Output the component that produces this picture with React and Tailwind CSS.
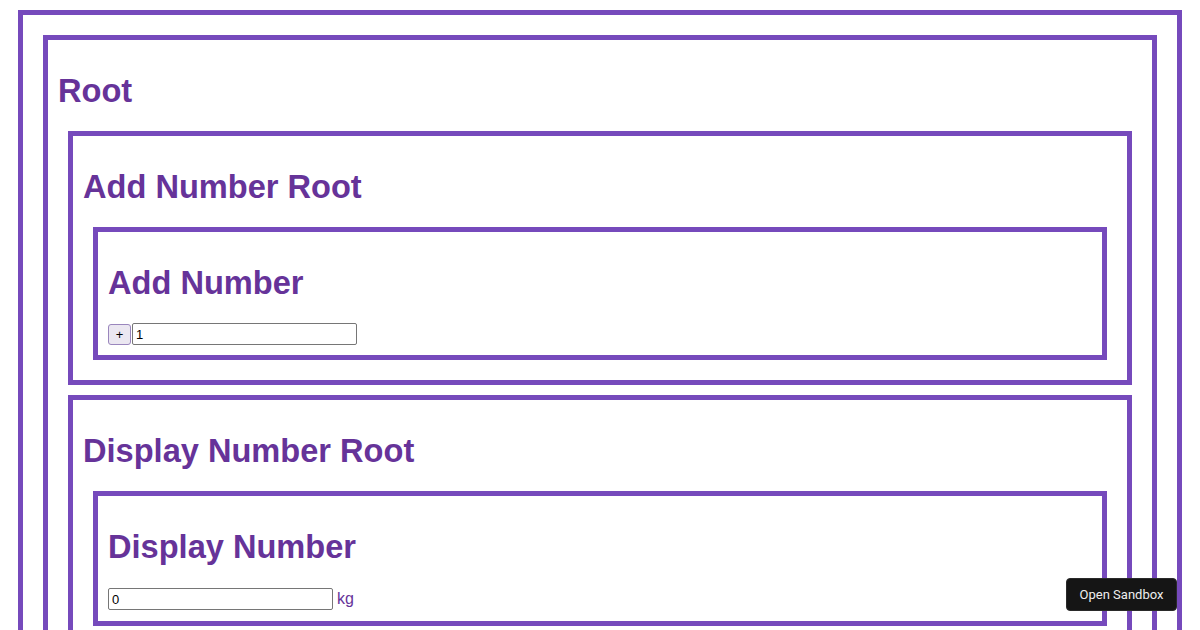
import React, { useState } from 'react';

const font = { fontFamily: '"Liberation Sans", Arial, sans-serif' };

function Box({ children, outer }) {
  return (
    <div
      className={`${outer ? 'mx-[18px] my-[10px]' : 'm-[10px]'} p-[10px] border-[5px] border-solid border-[#764abc]`}
    >
      {children}
    </div>
  );
}

function Title({ children }) {
  return (
    <h1 className="text-[32.6px] leading-[39px] font-bold text-[#663399] my-[21px]">
      {children}
    </h1>
  );
}

export default function App() {
  const [add, setAdd] = useState('1');
  const [total, setTotal] = useState(0);

  return (
    <div style={font} className="bg-white min-h-[630px] text-black">
      <Box outer>
        <Box>
          <Title>Root</Title>
          <Box>
            <Title>Add Number Root</Title>
            <Box>
              <Title>Add Number</Title>
              <div className="flex items-center">
                <button
                  onClick={() => setTotal(t => t + Number(add || 0))}
                  className="w-[23px] h-[21px] text-[13px] leading-none bg-[#ebe7f1] border border-[#9a86bd] rounded-[3px] text-black"
                >
                  +
                </button>
                <input
                  value={add}
                  onChange={e => setAdd(e.target.value)}
                  className="ml-px w-[225px] h-[22px] px-[3px] text-[13px] border border-[#767676] rounded-[2px] outline-none"
                />
              </div>
            </Box>
          </Box>
          <Box>
            <Title>Display Number Root</Title>
            <Box>
              <Title>Display Number</Title>
              <div className="flex items-center">
                <input
                  value={total}
                  readOnly
                  className="w-[225px] h-[22px] px-[3px] text-[13px] border border-[#767676] rounded-[2px] outline-none"
                />
                <span className="ml-[4px] text-[16px] text-[#663399]">kg</span>
              </div>
            </Box>
          </Box>
        </Box>
      </Box>
      <button
        className="fixed right-[23px] bottom-[19px] w-[111px] h-[33px] rounded-[4px] bg-[#151515] border border-[#2a2a2a] text-[13px] text-[#eeeeee] text-center"
        style={{ fontFamily: 'Roboto, "Liberation Sans", sans-serif' }}
      >
        Open Sandbox
      </button>
    </div>
  );
}
